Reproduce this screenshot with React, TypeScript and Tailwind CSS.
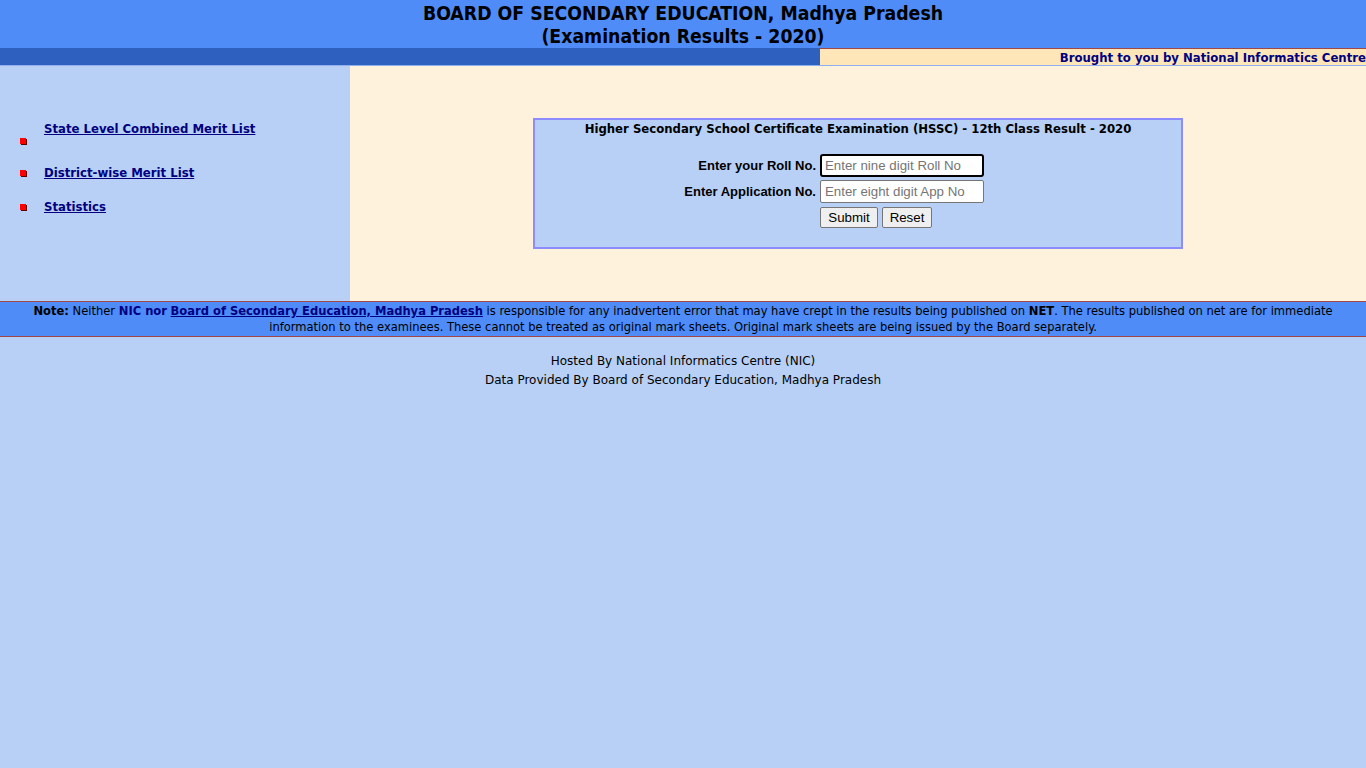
import React from 'react'

const tahoma = { fontFamily: '"DejaVu Sans Condensed", "DejaVu Sans", sans-serif' }
const arial = { fontFamily: '"Liberation Sans", Arial, sans-serif' }

const menuItems = [
  { label: 'State Level Combined Merit List', bulletPad: 'pt-[17px]', space: 'mt-0', tall: true },
  { label: 'District-wise Merit List', bulletPad: 'pt-[5px]', space: 'mt-[19px]', tall: false },
  { label: 'Statistics', bulletPad: 'pt-[5px]', space: 'mt-[18px]', tall: false },
]

function Bullet() {
  return <span className="block w-[6px] h-[6px] bg-[#ff0000] shadow-[1px_1px_0_#600000]" />
}

export default function App() {
  return (
    <div className="min-h-[768px] bg-[#b8d0f6]" style={tahoma}>
      {/* Header */}
      <div className="h-[48px] bg-[#4f8cf8] flex flex-col items-center pt-[2px]">
        <h1 className="text-[19.3px] leading-[23px] font-bold text-black text-center">
          BOARD OF SECONDARY EDUCATION, Madhya Pradesh
          <br />
          (Examination Results - 2020)
        </h1>
      </div>

      {/* Strip */}
      <div className="flex h-[18px] border-b border-[#8fb0ee]">
        <div className="w-[820px] bg-[#2e61bf]" />
        <div className="flex-1 bg-[#ffe6b8] border-t border-[#a04848] flex items-center justify-end">
          <span className="text-[13px] font-bold text-[#000080] leading-none">
            Brought to you by National Informatics Centre
          </span>
        </div>
      </div>

      {/* Content */}
      <div className="flex h-[235px]">
        <div className="w-[350px] bg-[#b8d0f6] pt-[55px] pl-[20px]">
          <ul className="flex flex-col">
            {menuItems.map((item) => (
              <li key={item.label} className={`flex gap-[18px] ${item.space}`}>
                <span className={item.bulletPad}>
                  <Bullet />
                </span>
                <div className="flex flex-col">
                  <a href="#" className="text-[13px] font-bold text-[#000080] underline leading-[16px]">
                    {item.label}
                  </a>
                  {item.tall && <span className="h-[9px]" />}
                </div>
              </li>
            ))}
          </ul>
        </div>
        <div className="flex-1 bg-[#fff2dd] flex justify-center pt-[52px]">
          <div className="w-[650px] h-[131px] border-2 border-[#8c8cff] bg-[#b8d0f6] flex flex-col items-center pt-[1px]">
            <div className="text-[13px] font-bold text-black leading-[16px]">
              Higher Secondary School Certificate Examination (HSSC) - 12th Class Result - 2020
            </div>
            <div
              className="mt-[17px] self-stretch grid grid-cols-[281px_164px] gap-x-[4px] gap-y-[3px] items-center"
              style={arial}
            >
              <label className="font-bold text-right text-black text-[13px]">Enter your Roll No.</label>
              <input
                placeholder="Enter nine digit Roll No"
                className="w-[164px] h-[23px] bg-white border-2 border-black rounded-[3px] px-[3px] text-[13.3px] placeholder:text-[#757575] outline-none"
              />
              <label className="font-bold text-right text-black text-[13px]">Enter Application No.</label>
              <input
                placeholder="Enter eight digit App No"
                className="w-[164px] h-[23px] bg-white border border-[#767676] rounded-[2px] px-[4px] text-[13.3px] placeholder:text-[#757575] outline-none"
              />
              <span />
              <div className="flex gap-[4px] mt-[1px]">
                <button className="h-[21px] w-[58px] bg-[#efefef] border border-[#767676] rounded-[2px] text-[13.3px] leading-none text-black">
                  Submit
                </button>
                <button className="h-[21px] w-[50px] bg-[#efefef] border border-[#767676] rounded-[2px] text-[13.3px] leading-none text-black">
                  Reset
                </button>
              </div>
            </div>
          </div>
        </div>
      </div>

      {/* Note */}
      <div className="bg-[#4f8cf8] border-y border-[#a04848] px-[30px] py-[1px] text-center text-[12.8px] leading-[16px] text-black">
        <b>Note:</b> Neither <b className="text-[#000080]">NIC nor</b>{' '}
        <a href="#" className="font-bold text-[#000080] underline">Board of Secondary Education, Madhya Pradesh</a> is
        responsible for any inadvertent error that may have crept in the results being published on <b>NET</b>. The
        results published on net are for immediate information to the examinees. These cannot be treated as original
        mark sheets. Original mark sheets are being issued by the Board separately.
      </div>

      {/* Footer */}
      <div
        className="pt-[15px] text-center text-[12px] leading-[19px] text-black"
        style={{ fontFamily: '"DejaVu Sans", sans-serif' }}
      >
        <div>Hosted By National Informatics Centre (NIC)</div>
        <div>Data Provided By Board of Secondary Education, Madhya Pradesh</div>
      </div>
    </div>
  )
}
